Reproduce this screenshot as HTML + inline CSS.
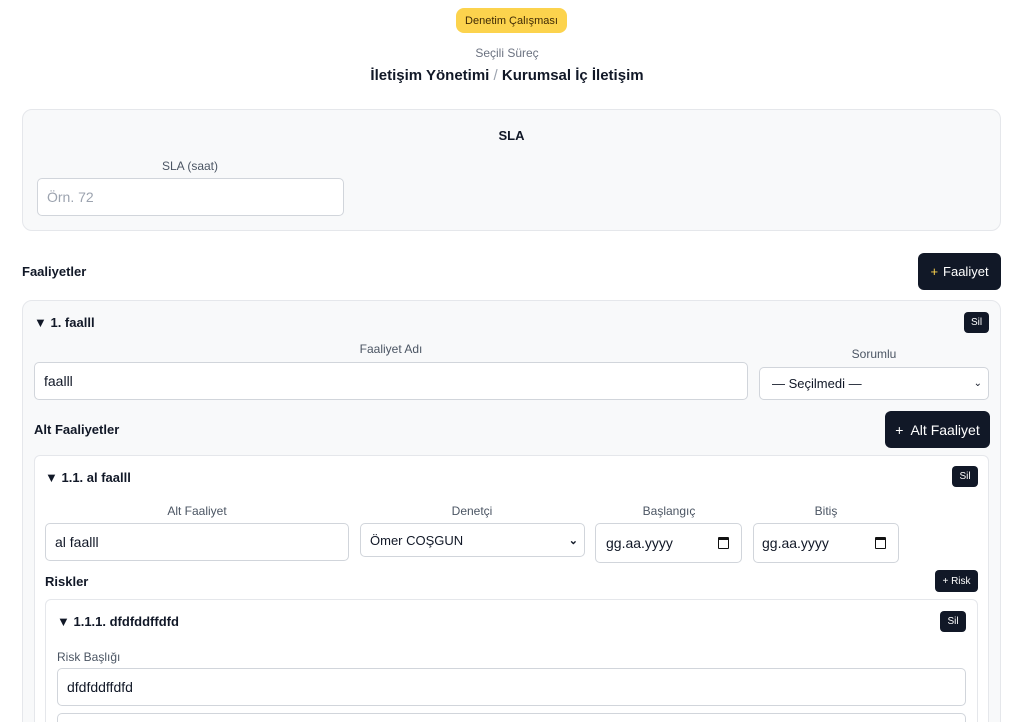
<!DOCTYPE html>
<html style="width:1014px;height:722px;overflow:hidden"><head><meta charset="utf-8"><style>
*{box-sizing:border-box;margin:0;padding:0}
body{width:1014px;height:722px;overflow:hidden;background:#fff;font-family:"Liberation Sans",sans-serif;color:#111827;position:relative}
.a{position:absolute}
.card{position:absolute;border:1px solid #e5e7eb;border-radius:10px;background:#f8f9fa}
.wcard{position:absolute;border:1px solid #e5e7eb;border-radius:6px;background:#fff}
.inp{position:absolute;border:1px solid #d1d5db;border-radius:5px;background:#fff;font-size:14px;padding-left:9px;display:flex;align-items:center}
.lbl{position:absolute;font-size:12px;color:#4b5563;transform:translateX(-50%);white-space:nowrap}
.btn{position:absolute;background:#111827;color:#fff;border-radius:6px;display:flex;align-items:center;justify-content:center;font-size:13px}
.sil{position:absolute;background:#111827;color:#fff;border-radius:4px;font-size:10px;display:flex;align-items:center;justify-content:center}
.h{position:absolute;font-size:13px;font-weight:bold;white-space:nowrap}
.cal{position:absolute;right:12px;top:13px;width:11px;height:12px;border:1.5px solid #111;border-top-width:3px;border-radius:1px}
</style></head><body>
<div class="a" style="left:456px;top:8px;width:111px;height:25px;background:#fcd34d;border-radius:8px;font-size:11px;color:#3f2a05;display:flex;align-items:center;justify-content:center">Denetim Çalışması</div>
<div class="a" style="left:0;width:1014px;top:46px;text-align:center;font-size:12px;color:#6b7280">Seçili Süreç</div>
<div class="a" style="left:0;width:1014px;top:67px;text-align:center;font-size:15px;font-weight:bold">İletişim Yönetimi <span style="color:#9ca3af;font-weight:normal">/</span> Kurumsal İç İletişim</div>

<div class="card" style="left:22px;top:109px;width:979px;height:122px"></div>
<div class="a" style="left:22px;width:979px;top:128px;text-align:center;font-size:13px;font-weight:bold">SLA</div>
<div class="lbl" style="left:190px;top:159px">SLA (saat)</div>
<div class="inp" style="left:37px;top:178px;width:307px;height:38px;color:#9ca3af">Örn. 72</div>

<div class="h" style="left:22px;top:264px">Faaliyetler</div>
<div class="btn" style="left:918px;top:253px;width:83px;height:37px"><span style="color:#fcd34d;margin-right:5px">+</span>Faaliyet</div>

<div class="card" style="left:22px;top:300px;width:979px;height:440px"></div>
<div class="h" style="left:34px;top:315px">▼ 1. faalll</div>
<div class="sil" style="left:964px;top:312px;width:25px;height:21px">Sil</div>
<div class="lbl" style="left:391px;top:342px">Faaliyet Adı</div>
<div class="inp" style="left:34px;top:362px;width:714px;height:38px">faalll</div>
<div class="lbl" style="left:874px;top:347px">Sorumlu</div>
<div class="inp" style="left:759px;top:367px;width:230px;height:33px;font-size:13px;padding-left:12px">— Seçilmedi —<span style="position:absolute;right:6px;font-size:10px">&#x2304;</span></div>
<div class="h" style="left:34px;top:422px">Alt Faaliyetler</div>
<div class="btn" style="left:885px;top:411px;width:105px;height:37px;font-size:14px">+&nbsp; Alt Faaliyet</div>

<div class="wcard" style="left:34px;top:455px;width:955px;height:290px"></div>
<div class="h" style="left:45px;top:470px">▼ 1.1. al faalll</div>
<div class="sil" style="left:952px;top:466px;width:26px;height:21px">Sil</div>
<div class="lbl" style="left:197px;top:504px">Alt Faaliyet</div>
<div class="lbl" style="left:472px;top:504px">Denetçi</div>
<div class="lbl" style="left:669px;top:504px">Başlangıç</div>
<div class="lbl" style="left:826px;top:504px">Bitiş</div>
<div class="inp" style="left:45px;top:523px;width:304px;height:38px">al faalll</div>
<div class="inp" style="left:360px;top:523px;width:225px;height:34px;font-size:13px">Ömer COŞGUN<span style="position:absolute;right:6px;font-size:11px;font-weight:bold">&#x2304;</span></div>
<div class="inp" style="left:595px;top:523px;width:147px;height:40px;padding-left:10px">gg.aa.yyyy<span class="cal"></span></div>
<div class="inp" style="left:753px;top:523px;width:146px;height:40px;padding-left:8px">gg.aa.yyyy<span class="cal"></span></div>
<div class="h" style="left:45px;top:574px">Riskler</div>
<div class="sil" style="left:935px;top:570px;width:43px;height:22px">+ Risk</div>

<div class="wcard" style="left:45px;top:599px;width:933px;height:140px"></div>
<div class="h" style="left:57px;top:614px">▼ 1.1.1. dfdfddffdfd</div>
<div class="sil" style="left:940px;top:611px;width:26px;height:21px">Sil</div>
<div class="a" style="left:57px;top:650px;font-size:12px;color:#4b5563">Risk Başlığı</div>
<div class="inp" style="left:57px;top:668px;width:909px;height:38px">dfdfddffdfd</div>
<div class="inp" style="left:57px;top:713px;width:909px;height:20px;border-bottom:none;border-radius:5px 5px 0 0"></div>
</body></html>
